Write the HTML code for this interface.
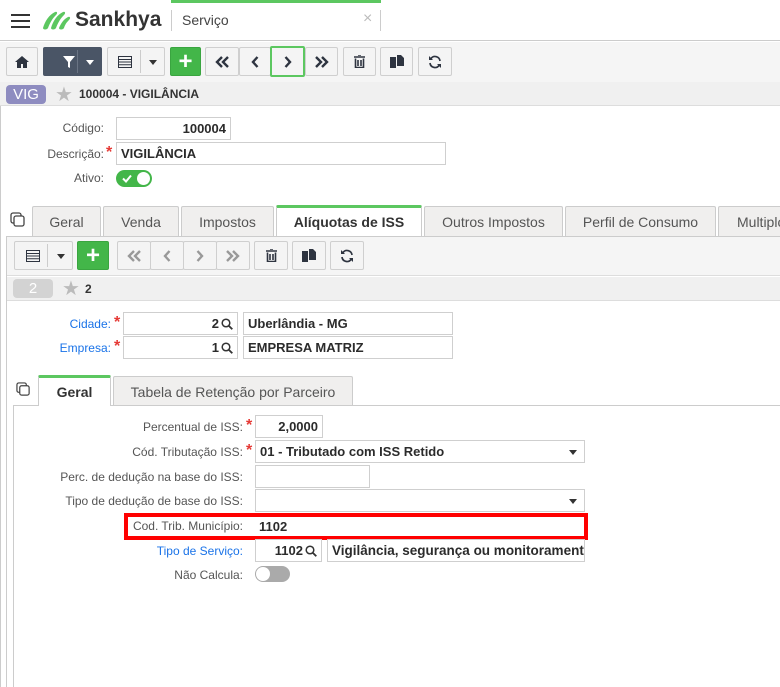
<!DOCTYPE html>
<html><head><meta charset="utf-8">
<style>
*{box-sizing:border-box;margin:0;padding:0}
body{width:780px;height:687px;overflow:hidden;background:#fff;font-family:"Liberation Sans",Arial,sans-serif;font-size:13px;color:#333;position:relative}
.a{position:absolute}
.btn{position:absolute;height:29px;border:1px solid #cfcfcf;border-radius:2px;background:#f4f4f4;display:flex;align-items:center;justify-content:center;color:#2e3440}
.inp{position:absolute;height:23px;border:1px solid #cfcfcf;background:#fff;font-size:13px;font-weight:bold;color:#2b2b2b;display:flex;align-items:center;padding:0 4px}
.lbl{position:absolute;font-size:12px;color:#555;text-align:right}
.blue{color:#1a73e8}
.star{position:absolute;color:#e53935;font-size:16px;font-weight:bold}
.tab{position:absolute;height:30px;border:1px solid #ccc;border-bottom:none;background:#f0efee;color:#555;font-size:14px;display:flex;align-items:center;justify-content:center;border-radius:2px 2px 0 0}
.tab.on{background:#fff;border-top:3px solid #5cc760;color:#333;font-weight:bold;height:31px}
.caret{width:0;height:0;border-left:4px solid transparent;border-right:4px solid transparent;border-top:5px solid #333}
</style></head><body>
<!-- header -->
<div class="a" style="left:0;top:0;width:780px;height:41px;border-bottom:1px solid #ccc"></div>
<div class="a" style="left:11px;top:14px;width:19px;height:2px;background:#333;box-shadow:0 6px 0 #333,0 12px 0 #333"></div>
<svg class="a" style="left:41px;top:9px" width="30" height="22" viewBox="0 0 30 22"><path d="M2 19 C4 12 8 6 14 3 C16 2 17 4 15 6 C11 10 9 14 7 19 C6 21 2 21 2 19Z M10 19 C12 12 16 6 22 3 C24 2 25 4 23 6 C19 10 17 14 15 19 C14 21 10 21 10 19Z M18 19 C20 14 23 10 27 8 C29 7 30 9 28 11 C25 14 24 16 23 19 C22 21 18 21 18 19Z" fill="#5cc760"/></svg>
<div class="a" style="left:75px;top:8px;font-size:21px;font-weight:bold;color:#333">Sankhya</div>
<div class="a" style="left:171px;top:0;width:210px;height:3px;background:#5cc760"></div>
<div class="a" style="left:171px;top:10px;width:1px;height:21px;background:#ccc"></div>
<div class="a" style="left:380px;top:10px;width:1px;height:21px;background:#ccc"></div>
<div class="a" style="left:182px;top:12px;font-size:14px;color:#444">Serviço</div>
<div class="a" style="left:363px;top:10px;font-size:16px;color:#bbb">×</div>
<!-- toolbar -->
<div class="a" style="left:0;top:42px;width:780px;height:40px;background:#f5f5f5"></div>
<div class="btn" style="left:6px;top:47px;width:32px"><svg width="14" height="12" viewBox="0 0 14 12"><path d="M7 0L0 6h2v6h4V8h2v4h4V6h2z" fill="#2e3440"/></svg></div>
<div class="btn" style="left:43px;top:47px;width:59px;background:#4a5566;border-color:#4a5566"><svg style="margin-left:-8px" width="12" height="12" viewBox="0 0 12 12"><path d="M0 0h12L7 6v6L5 11V6z" fill="#fff"/></svg><div class="a" style="left:33px;top:2px;width:1px;height:23px;background:#6a7484"></div><div class="caret a" style="left:42px;top:12px;border-top-color:#fff"></div></div>
<div class="btn" style="left:107px;top:47px;width:58px"><svg style="margin-left:-22px" width="14" height="12" viewBox="0 0 14 12"><path d="M0.5 0.5h13v11h-13zM0.5 3.5h13M0.5 6h13M0.5 8.7h13" stroke="#2e3440" fill="none"/></svg><div class="a" style="left:32px;top:2px;width:1px;height:23px;background:#ccc"></div><div class="caret a" style="left:41px;top:12px"></div></div>
<div class="btn" style="left:170px;top:47px;width:31px;background:#43b649;border-color:#3aa540;color:#fff;font-size:24px;font-weight:bold">+</div>
<div class="btn" style="left:205px;top:47px;width:34px"><svg width="14" height="12" viewBox="0 0 14 12"><path d="M7 1L2 6l5 5M13 1L8 6l5 5" stroke="#2e3440" stroke-width="2.4" fill="none"/></svg></div>
<div class="btn" style="left:239px;top:47px;width:32px"><svg width="8" height="12" viewBox="0 0 8 12"><path d="M6.5 1L2 6l4.5 5" stroke="#2e3440" stroke-width="2.4" fill="none"/></svg></div>
<div class="btn" style="left:270px;top:46px;width:35px;height:31px;border:2px solid #5cc760"><svg width="8" height="12" viewBox="0 0 8 12"><path d="M1.5 1L6 6l-4.5 5" stroke="#2e3440" stroke-width="2.4" fill="none"/></svg></div>
<div class="btn" style="left:305px;top:47px;width:33px"><svg width="14" height="12" viewBox="0 0 14 12"><path d="M1 1l5 5-5 5M7 1l5 5-5 5" stroke="#2e3440" stroke-width="2.4" fill="none"/></svg></div>
<div class="btn" style="left:343px;top:47px;width:33px"><svg width="11" height="13" viewBox="0 0 11 13"><path d="M0 2h11M4 0h3M1.5 3.5v9h8v-9M4 5v6M7 5v6" stroke="#2e3440" stroke-width="1.6" fill="none"/></svg></div>
<div class="btn" style="left:380px;top:47px;width:33px"><svg width="14" height="13" viewBox="0 0 14 13"><path d="M0 2h6v11H0zM7 0h4l3 3v8H7z" fill="#2e3440"/></svg></div>
<div class="btn" style="left:418px;top:47px;width:34px"><svg width="14" height="14" viewBox="0 0 14 14"><path d="M12 6A5 5 0 0 0 3 3.5M2 8a5 5 0 0 0 9 2.5" stroke="#2e3440" stroke-width="1.7" fill="none"/><path d="M1 1v4h4zM13 13V9H9z" fill="#2e3440"/></svg></div>
<!-- breadcrumb -->
<div class="a" style="left:0;top:82px;width:780px;height:24px;background:#f0f0f0;border-bottom:1px solid #ddd"></div>
<div class="a" style="left:6px;top:85px;width:40px;height:19px;border-radius:4px;background:#8e8cc0;color:#fff;font-size:15px;text-align:center;line-height:19px">VIG</div>
<div class="a" style="left:55px;top:82px;font-size:20px;color:#bbb">★</div>
<div class="a" style="left:79px;top:87px;font-size:12px;font-weight:bold;color:#333">100004 - VIGILÂNCIA</div>
<div class="a" style="left:0;top:106px;width:1px;height:581px;background:#ccc"></div>
<!-- form -->
<div class="lbl" style="left:20px;top:121px;width:84px">Código:</div>
<div class="inp" style="left:116px;top:117px;width:115px;justify-content:flex-end">100004</div>
<div class="lbl" style="left:20px;top:147px;width:84px">Descrição:</div><div class="star" style="left:106px;top:144px">*</div>
<div class="inp" style="left:116px;top:142px;width:330px">VIGILÂNCIA</div>
<div class="lbl" style="left:20px;top:171px;width:84px">Ativo:</div>
<div class="a" style="left:116px;top:170px;width:36px;height:17px;border-radius:9px;background:#43b649"></div>
<div class="a" style="left:137px;top:172px;width:13px;height:13px;border-radius:50%;background:#fff"></div>
<svg class="a" style="left:122px;top:174px" width="10" height="9" viewBox="0 0 10 9"><path d="M1 4.5l3 3 5-6" stroke="#fff" stroke-width="2" fill="none"/></svg>
<!-- tabs -->
<svg class="a" style="left:10px;top:212px" width="16" height="16" viewBox="0 0 16 16"><rect x="1" y="1" width="10" height="10" rx="2" fill="none" stroke="#444" stroke-width="1.3"/><rect x="4" y="4" width="10" height="10" rx="2" fill="#fff" stroke="#444" stroke-width="1.3"/></svg>
<div class="tab" style="left:32px;top:206px;width:69px">Geral</div>
<div class="tab" style="left:103px;top:206px;width:76px">Venda</div>
<div class="tab" style="left:181px;top:206px;width:93px">Impostos</div>
<div class="tab on" style="left:276px;top:205px;width:146px">Alíquotas de ISS</div>
<div class="tab" style="left:424px;top:206px;width:139px">Outros Impostos</div>
<div class="tab" style="left:565px;top:206px;width:151px">Perfil de Consumo</div>
<div class="tab" style="left:718px;top:206px;width:80px;justify-content:flex-start;padding-left:18px">Multiplo</div>
<div class="a" style="left:6px;top:236px;width:774px;height:1px;background:#ccc"></div>
<div class="a" style="left:6px;top:236px;width:1px;height:451px;background:#ccc"></div>
<div class="a" style="left:7px;top:237px;width:773px;height:39px;background:#f5f5f5;border-bottom:1px solid #ddd"></div>
<div class="btn" style="left:14px;top:241px;width:59px"><svg style="margin-left:-22px" width="14" height="12" viewBox="0 0 14 12"><path d="M0.5 0.5h13v11h-13zM0.5 3.5h13M0.5 6h13M0.5 8.7h13" stroke="#2e3440" fill="none"/></svg><div class="a" style="left:32px;top:2px;width:1px;height:23px;background:#ccc"></div><div class="caret a" style="left:42px;top:12px"></div></div>
<div class="btn" style="left:77px;top:241px;width:32px;background:#43b649;border-color:#3aa540;color:#fff;font-size:24px;font-weight:bold">+</div>
<div class="btn" style="left:117px;top:241px;width:34px"><svg width="14" height="12" viewBox="0 0 14 12"><path d="M7 1L2 6l5 5M13 1L8 6l5 5" stroke="#999" stroke-width="2.4" fill="none"/></svg></div>
<div class="btn" style="left:150px;top:241px;width:34px"><svg width="8" height="12" viewBox="0 0 8 12"><path d="M6.5 1L2 6l4.5 5" stroke="#999" stroke-width="2.4" fill="none"/></svg></div>
<div class="btn" style="left:183px;top:241px;width:34px"><svg width="8" height="12" viewBox="0 0 8 12"><path d="M1.5 1L6 6l-4.5 5" stroke="#999" stroke-width="2.4" fill="none"/></svg></div>
<div class="btn" style="left:216px;top:241px;width:34px"><svg width="14" height="12" viewBox="0 0 14 12"><path d="M1 1l5 5-5 5M7 1l5 5-5 5" stroke="#999" stroke-width="2.4" fill="none"/></svg></div>
<div class="btn" style="left:254px;top:241px;width:34px"><svg width="11" height="13" viewBox="0 0 11 13"><path d="M0 2h11M4 0h3M1.5 3.5v9h8v-9M4 5v6M7 5v6" stroke="#2e3440" stroke-width="1.6" fill="none"/></svg></div>
<div class="btn" style="left:292px;top:241px;width:34px"><svg width="14" height="13" viewBox="0 0 14 13"><path d="M0 2h6v11H0zM7 0h4l3 3v8H7z" fill="#2e3440"/></svg></div>
<div class="btn" style="left:330px;top:241px;width:34px"><svg width="14" height="14" viewBox="0 0 14 14"><path d="M12 6A5 5 0 0 0 3 3.5M2 8a5 5 0 0 0 9 2.5" stroke="#2e3440" stroke-width="1.7" fill="none"/><path d="M1 1v4h4zM13 13V9H9z" fill="#2e3440"/></svg></div>
<div class="a" style="left:7px;top:277px;width:773px;height:24px;background:#f0f0f0;border-bottom:1px solid #ddd"></div>
<div class="a" style="left:13px;top:279px;width:40px;height:19px;border-radius:4px;background:#d3d3d3;color:#fff;font-size:15px;text-align:center;line-height:19px">2</div>
<div class="a" style="left:62px;top:276px;font-size:20px;color:#bbb">★</div>
<div class="a" style="left:85px;top:282px;font-size:12px;font-weight:bold;color:#333">2</div>
<div class="lbl blue" style="left:20px;top:317px;width:91px">Cidade:</div><div class="star" style="left:114px;top:314px">*</div>
<div class="inp" style="left:123px;top:312px;width:115px;justify-content:flex-end">2<svg style="margin-left:2px" width="12" height="12" viewBox="0 0 12 12"><circle cx="5" cy="5" r="3.8" stroke="#333" stroke-width="1.5" fill="none"/><path d="M8 8l3.3 3.3" stroke="#333" stroke-width="1.8"/></svg></div>
<div class="inp" style="left:243px;top:312px;width:210px">Uberlândia - MG</div>
<div class="lbl blue" style="left:20px;top:341px;width:91px">Empresa:</div><div class="star" style="left:114px;top:338px">*</div>
<div class="inp" style="left:123px;top:336px;width:115px;justify-content:flex-end">1<svg style="margin-left:2px" width="12" height="12" viewBox="0 0 12 12"><circle cx="5" cy="5" r="3.8" stroke="#333" stroke-width="1.5" fill="none"/><path d="M8 8l3.3 3.3" stroke="#333" stroke-width="1.8"/></svg></div>
<div class="inp" style="left:243px;top:336px;width:210px">EMPRESA MATRIZ</div>
<!-- sub tabs -->
<svg class="a" style="left:16px;top:382px" width="15" height="15" viewBox="0 0 16 16"><rect x="1" y="1" width="10" height="10" rx="2" fill="none" stroke="#444" stroke-width="1.3"/><rect x="4" y="4" width="10" height="10" rx="2" fill="#fff" stroke="#444" stroke-width="1.3"/></svg>
<div class="tab on" style="left:38px;top:375px;width:73px;z-index:2">Geral</div>
<div class="tab" style="left:113px;top:376px;width:240px">Tabela de Retenção por Parceiro</div>
<div class="a" style="left:13px;top:405px;width:767px;height:1px;background:#ccc"></div>
<div class="a" style="left:13px;top:405px;width:1px;height:282px;background:#ccc"></div>
<div class="lbl" style="left:20px;top:420px;width:223px">Percentual de ISS:</div><div class="star" style="left:246px;top:417px">*</div>
<div class="inp" style="left:255px;top:415px;width:68px;justify-content:flex-end">2,0000</div>
<div class="lbl" style="left:20px;top:445px;width:223px">Cód. Tributação ISS:</div><div class="star" style="left:246px;top:442px">*</div>
<div class="inp" style="left:255px;top:440px;width:330px">01 - Tributado com ISS Retido<div class="caret a" style="right:7px;top:9px"></div></div>
<div class="lbl" style="left:20px;top:470px;width:223px">Perc. de dedução na base do ISS:</div>
<div class="inp" style="left:255px;top:465px;width:115px"></div>
<div class="lbl" style="left:20px;top:494px;width:223px">Tipo de dedução de base do ISS:</div>
<div class="inp" style="left:255px;top:489px;width:330px"><div class="caret a" style="right:7px;top:9px"></div></div>
<div class="a" style="left:124px;top:513px;width:464px;height:27px;border:4px solid #f00"></div>
<div class="lbl" style="left:20px;top:519px;width:223px">Cod. Trib. Município:</div>
<div class="inp" style="left:255px;top:515px;width:330px;border:none;background:transparent">1102</div>
<div class="lbl blue" style="left:20px;top:544px;width:223px">Tipo de Serviço:</div>
<div class="inp" style="left:255px;top:539px;width:67px;justify-content:flex-end">1102<svg style="margin-left:2px" width="12" height="12" viewBox="0 0 12 12"><circle cx="5" cy="5" r="3.8" stroke="#333" stroke-width="1.5" fill="none"/><path d="M8 8l3.3 3.3" stroke="#333" stroke-width="1.8"/></svg></div>
<div class="inp" style="left:327px;top:539px;width:258px;overflow:hidden;white-space:nowrap;font-size:13.5px;padding-right:0">Vigilância, segurança ou monitoramento</div>
<div class="lbl" style="left:20px;top:568px;width:223px">Não Calcula:</div>
<div class="a" style="left:255px;top:566px;width:35px;height:16px;border-radius:8px;background:#aaa"></div>
<div class="a" style="left:256px;top:567px;width:14px;height:14px;border-radius:50%;background:#fff"></div>
</body></html>
